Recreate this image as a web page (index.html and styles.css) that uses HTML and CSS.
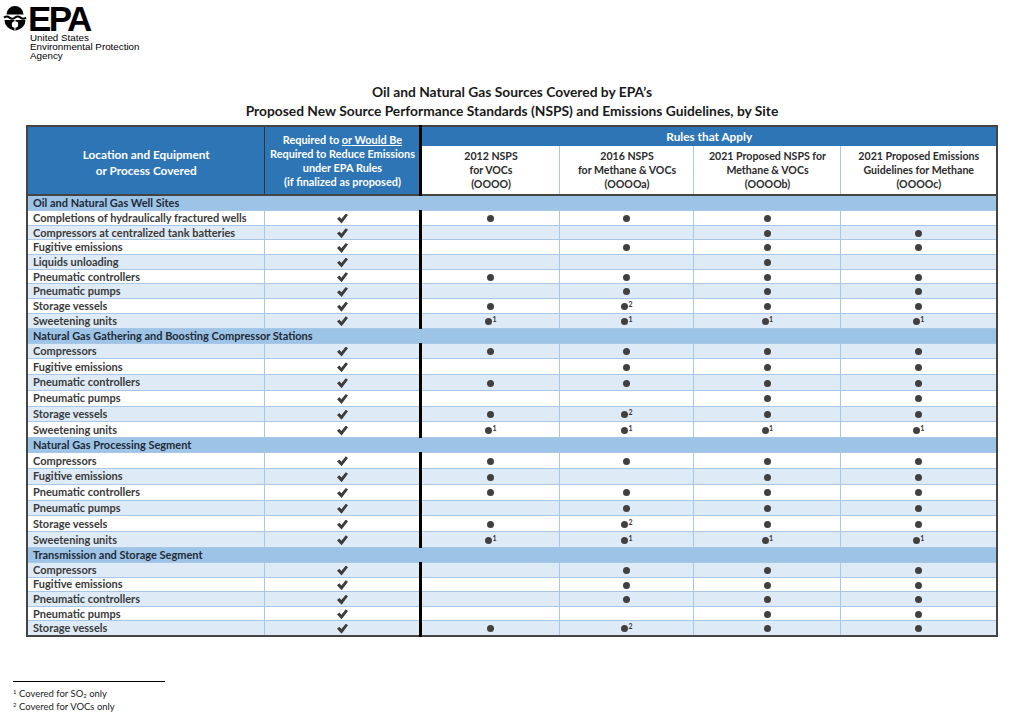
FILE: index.html
```html
<!DOCTYPE html>
<html lang="en">
<head>
<meta charset="utf-8">
<title>Oil and Natural Gas Sources Covered by EPA's NSPS</title>
<link rel="stylesheet" href="styles.css">
</head>
<body>
<div class="page">
  <header class="brand">
    <div class="brand-top">
      <svg class="seal" viewBox="0 0 24 26" width="24" height="26" aria-hidden="true">
        <path d="M3.5 9.5 A8.5 8.5 0 0 1 20.5 9.5 Z" fill="#000"/>
        <path d="M1 12.6 q2.75 -2.2 5.5 0 t5.5 0 t5.5 0 t5.5 0" stroke="#000" stroke-width="2" fill="none"/>
        <path d="M1.5 15 L22.5 15 Q22.5 23 12 26 Q1.5 23 1.5 15 Z" fill="#000"/>
        <circle cx="12" cy="19.5" r="3.2" fill="#fff"/>
        <path d="M12 15 L12 26" stroke="#fff" stroke-width="1"/>
      </svg>
      <span class="epa">EPA</span>
    </div>
    <div class="agency">United States<br>Environmental Protection<br>Agency</div>
  </header>

  <h1 class="title">Oil and Natural Gas Sources Covered by EPA’s<br>Proposed New Source Performance Standards (NSPS) and Emissions Guidelines, by Site</h1>

  <table class="grid">
    <colgroup>
      <col class="c-name"><col class="c-req"><col class="c-r1"><col class="c-r2"><col class="c-r3"><col class="c-r4">
    </colgroup>
    <thead>
      <tr class="h1">
        <th class="h-loc" rowspan="2">Location and Equipment<br>or Process Covered</th>
        <th class="h-req" rowspan="2">Required to <u>or Would Be</u><br>Required to Reduce Emissions<br>under EPA Rules<br>(if finalized as proposed)</th>
        <th class="h-rules" colspan="4">Rules that Apply</th>
      </tr>
      <tr class="h2">
        <th class="h-sub first">2012 NSPS<br>for VOCs<br>(OOOO)</th>
        <th class="h-sub">2016 NSPS<br>for Methane &amp; VOCs<br>(OOOOa)</th>
        <th class="h-sub">2021 Proposed NSPS for<br>Methane &amp; VOCs<br>(OOOOb)</th>
        <th class="h-sub">2021 Proposed Emissions<br>Guidelines for Methane<br>(OOOOc)</th>
      </tr>
    </thead>

    <tbody class="g-a">
      <tr class="sec"><td colspan="6">Oil and Natural Gas Well Sites</td></tr>
      <tr class="w"><td class="name">Completions of hydraulically fractured wells</td><td class="chk"><i class="ck"></i></td><td class="r first"><i class="dot"></i></td><td class="r"><i class="dot"></i></td><td class="r"><i class="dot"></i></td><td class="r"></td></tr>
      <tr class="b"><td class="name">Compressors at centralized tank batteries</td><td class="chk"><i class="ck"></i></td><td class="r first"></td><td class="r"></td><td class="r"><i class="dot"></i></td><td class="r"><i class="dot"></i></td></tr>
      <tr class="w"><td class="name">Fugitive emissions</td><td class="chk"><i class="ck"></i></td><td class="r first"></td><td class="r"><i class="dot"></i></td><td class="r"><i class="dot"></i></td><td class="r"><i class="dot"></i></td></tr>
      <tr class="b"><td class="name">Liquids unloading</td><td class="chk"><i class="ck"></i></td><td class="r first"></td><td class="r"></td><td class="r"><i class="dot"></i></td><td class="r"></td></tr>
      <tr class="w"><td class="name">Pneumatic controllers</td><td class="chk"><i class="ck"></i></td><td class="r first"><i class="dot"></i></td><td class="r"><i class="dot"></i></td><td class="r"><i class="dot"></i></td><td class="r"><i class="dot"></i></td></tr>
      <tr class="b"><td class="name">Pneumatic pumps</td><td class="chk"><i class="ck"></i></td><td class="r first"></td><td class="r"><i class="dot"></i></td><td class="r"><i class="dot"></i></td><td class="r"><i class="dot"></i></td></tr>
      <tr class="w"><td class="name">Storage vessels</td><td class="chk"><i class="ck"></i></td><td class="r first"><i class="dot"></i></td><td class="r"><i class="dot"></i><sup>2</sup></td><td class="r"><i class="dot"></i></td><td class="r"><i class="dot"></i></td></tr>
      <tr class="b"><td class="name">Sweetening units</td><td class="chk"><i class="ck"></i></td><td class="r first"><i class="dot"></i><sup>1</sup></td><td class="r"><i class="dot"></i><sup>1</sup></td><td class="r"><i class="dot"></i><sup>1</sup></td><td class="r"><i class="dot"></i><sup>1</sup></td></tr>
    </tbody>

    <tbody class="g-b">
      <tr class="sec"><td colspan="6">Natural Gas Gathering and Boosting Compressor Stations</td></tr>
      <tr class="b"><td class="name">Compressors</td><td class="chk"><i class="ck"></i></td><td class="r first"><i class="dot"></i></td><td class="r"><i class="dot"></i></td><td class="r"><i class="dot"></i></td><td class="r"><i class="dot"></i></td></tr>
      <tr class="w"><td class="name">Fugitive emissions</td><td class="chk"><i class="ck"></i></td><td class="r first"></td><td class="r"><i class="dot"></i></td><td class="r"><i class="dot"></i></td><td class="r"><i class="dot"></i></td></tr>
      <tr class="b"><td class="name">Pneumatic controllers</td><td class="chk"><i class="ck"></i></td><td class="r first"><i class="dot"></i></td><td class="r"><i class="dot"></i></td><td class="r"><i class="dot"></i></td><td class="r"><i class="dot"></i></td></tr>
      <tr class="w"><td class="name">Pneumatic pumps</td><td class="chk"><i class="ck"></i></td><td class="r first"></td><td class="r"></td><td class="r"><i class="dot"></i></td><td class="r"><i class="dot"></i></td></tr>
      <tr class="b"><td class="name">Storage vessels</td><td class="chk"><i class="ck"></i></td><td class="r first"><i class="dot"></i></td><td class="r"><i class="dot"></i><sup>2</sup></td><td class="r"><i class="dot"></i></td><td class="r"><i class="dot"></i></td></tr>
      <tr class="w"><td class="name">Sweetening units</td><td class="chk"><i class="ck"></i></td><td class="r first"><i class="dot"></i><sup>1</sup></td><td class="r"><i class="dot"></i><sup>1</sup></td><td class="r"><i class="dot"></i><sup>1</sup></td><td class="r"><i class="dot"></i><sup>1</sup></td></tr>
    </tbody>

    <tbody class="g-b">
      <tr class="sec"><td colspan="6">Natural Gas Processing Segment</td></tr>
      <tr class="w"><td class="name">Compressors</td><td class="chk"><i class="ck"></i></td><td class="r first"><i class="dot"></i></td><td class="r"><i class="dot"></i></td><td class="r"><i class="dot"></i></td><td class="r"><i class="dot"></i></td></tr>
      <tr class="b"><td class="name">Fugitive emissions</td><td class="chk"><i class="ck"></i></td><td class="r first"><i class="dot"></i></td><td class="r"></td><td class="r"><i class="dot"></i></td><td class="r"><i class="dot"></i></td></tr>
      <tr class="w"><td class="name">Pneumatic controllers</td><td class="chk"><i class="ck"></i></td><td class="r first"><i class="dot"></i></td><td class="r"><i class="dot"></i></td><td class="r"><i class="dot"></i></td><td class="r"><i class="dot"></i></td></tr>
      <tr class="b"><td class="name">Pneumatic pumps</td><td class="chk"><i class="ck"></i></td><td class="r first"></td><td class="r"><i class="dot"></i></td><td class="r"><i class="dot"></i></td><td class="r"><i class="dot"></i></td></tr>
      <tr class="w"><td class="name">Storage vessels</td><td class="chk"><i class="ck"></i></td><td class="r first"><i class="dot"></i></td><td class="r"><i class="dot"></i><sup>2</sup></td><td class="r"><i class="dot"></i></td><td class="r"><i class="dot"></i></td></tr>
      <tr class="b"><td class="name">Sweetening units</td><td class="chk"><i class="ck"></i></td><td class="r first"><i class="dot"></i><sup>1</sup></td><td class="r"><i class="dot"></i><sup>1</sup></td><td class="r"><i class="dot"></i><sup>1</sup></td><td class="r"><i class="dot"></i><sup>1</sup></td></tr>
    </tbody>

    <tbody class="g-c">
      <tr class="sec"><td colspan="6">Transmission and Storage Segment</td></tr>
      <tr class="b"><td class="name">Compressors</td><td class="chk"><i class="ck"></i></td><td class="r first"></td><td class="r"><i class="dot"></i></td><td class="r"><i class="dot"></i></td><td class="r"><i class="dot"></i></td></tr>
      <tr class="w"><td class="name">Fugitive emissions</td><td class="chk"><i class="ck"></i></td><td class="r first"></td><td class="r"><i class="dot"></i></td><td class="r"><i class="dot"></i></td><td class="r"><i class="dot"></i></td></tr>
      <tr class="b"><td class="name">Pneumatic controllers</td><td class="chk"><i class="ck"></i></td><td class="r first"></td><td class="r"><i class="dot"></i></td><td class="r"><i class="dot"></i></td><td class="r"><i class="dot"></i></td></tr>
      <tr class="w"><td class="name">Pneumatic pumps</td><td class="chk"><i class="ck"></i></td><td class="r first"></td><td class="r"></td><td class="r"><i class="dot"></i></td><td class="r"><i class="dot"></i></td></tr>
      <tr class="b"><td class="name">Storage vessels</td><td class="chk"><i class="ck"></i></td><td class="r first"><i class="dot"></i></td><td class="r"><i class="dot"></i><sup>2</sup></td><td class="r"><i class="dot"></i></td><td class="r"><i class="dot"></i></td></tr>
    </tbody>
  </table>

  <footer class="notes">
    <div class="rule"></div>
    <p><sup>1</sup> Covered for SO<sub>2</sub> only</p>
    <p><sup>2</sup> Covered for VOCs only</p>
  </footer>
</div>
</body>
</html>
```
FILE: styles.css
```css
html, body {
  margin: 0;
  padding: 0;
  background: #fff;
}

.page {
  width: 1024px;
  height: 721px;
  position: relative;
  font-family: Lato, "Open Sans", sans-serif;
  color: #3a3a3a;
}

/* ---------- brand ---------- */
.brand {
  height: 60px;
  padding: 5px 0 0 3px;
  box-sizing: border-box;
}
.brand-top {
  display: flex;
  align-items: flex-start;
  gap: 1px;
  height: 28px;
}
.seal {
  display: block;
  margin-top: 0;
}
.epa {
  font-family: "Liberation Sans", Arial, sans-serif;
  font-weight: 700;
  font-size: 35px;
  line-height: 28px;
  letter-spacing: -2.6px;
  color: #000;
}
.agency {
  font-family: "Liberation Sans", Arial, sans-serif;
  font-size: 9.8px;
  line-height: 9.2px;
  color: #000;
  padding-left: 27px;
  margin-top: 0;
}

/* ---------- title ---------- */
.title {
  margin: 22px 0 5px;
  font-size: 13.8px;
  line-height: 19px;
  font-weight: 700;
  text-align: center;
  color: #1a1a1a;
}

/* ---------- table ---------- */
.grid {
  width: 970px;
  margin: 0 auto;
  border-collapse: collapse;
  table-layout: fixed;
  font-size: 11px;
  font-weight: 700;
  border: 2px solid #444;
}
.c-name { width: 238px; }
.c-req  { width: 156px; }
.c-r1   { width: 139px; }
.c-r2   { width: 134px; }
.c-r3   { width: 147px; }
.c-r4   { width: 156px; }

.grid th {
  padding: 0;
  font-weight: 700;
  text-align: center;
  line-height: 14px;
}
.h-loc, .h-req, .h-rules {
  background: #2e75b6;
  color: #fff;
}
.grid th.h-loc {
  border-right: 1px solid #333;
  font-size: 11.8px;
  line-height: 16px;
  padding-top: 5px;
}
.h-req { font-size: 10.9px; }
.h-req u { text-decoration-thickness: 1px; text-underline-offset: 1px; }
.h-rules {
  height: 19px;
  border-left: 3px solid #000;
  font-size: 11.8px;
}
.h2 { height: 49px; }
.h-sub {
  background: #fff;
  color: #2b2b2b;
  font-size: 10.6px;
  border-left: 1px solid #a7c7e7;
  border-bottom: 2px solid #444;
}
.h-sub.first { border-left: 3px solid #000; }
.h-loc, .h-req { border-bottom: 2px solid #444; }

.grid td {
  padding: 0;
  border-top: 1px solid #a7c7e7;
  border-left: 1px solid #a7c7e7;
  line-height: 12px;
  vertical-align: middle;
}
.sec td {
  background: #9dc3e6;
  color: #1f2a36;
  padding-left: 5px;
  border-left: 0;
  height: 14px;
}
.g-a tr.w, .g-a tr.b { height: 14.7px; }
.g-b tr.w, .g-b tr.b { height: 15.8px; }
.g-c tr.w, .g-c tr.b { height: 14.6px; }

tr.w td { background: #fff; }
tr.b td { background: #deebf7; }

td.name {
  padding-left: 5px;
  white-space: nowrap;
  color: #3a3a3a;
  border-left: 0;
}
td.chk, td.r { text-align: center; }
td.r.first { border-left: 3px solid #000; }

.ck {
  display: inline-block;
  width: 11px;
  height: 10px;
  vertical-align: middle;
  background: #3c3c3c;
  clip-path: polygon(0% 52%, 22% 32%, 40% 54%, 80% 0%, 100% 16%, 42% 100%);
  margin-top: -1px;
}
.dot {
  display: inline-block;
  width: 7px;
  height: 7px;
  border-radius: 50%;
  background: #404040;
  vertical-align: middle;
  margin-top: -1px;
}
td.r sup {
  font-size: 7px;
  line-height: 0;
  vertical-align: 3px;
  color: #333;
}

/* ---------- footnotes ---------- */
.notes {
  position: absolute;
  left: 13px;
  top: 681px;
  font-family: Lato, "Open Sans", sans-serif;
  font-size: 9.5px;
  color: #222;
}
.notes .rule {
  width: 152px;
  border-top: 1px solid #000;
  margin-bottom: 5px;
}
.notes p {
  margin: 0;
  line-height: 13px;
}
.notes sup {
  font-size: 6px;
  vertical-align: 3px;
  line-height: 0;
}
.notes sub {
  font-size: 6px;
  vertical-align: -1px;
  line-height: 0;
}
```
